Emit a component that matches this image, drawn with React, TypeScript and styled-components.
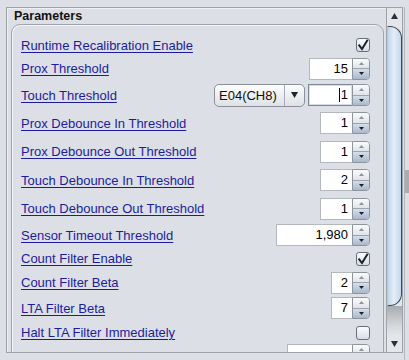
import React from "react";
import styled, { createGlobalStyle, css } from "styled-components";

const GlobalStyle = createGlobalStyle`
  html, body { margin: 0; padding: 0; }
  body {
    background: #dcdfe5;
    width: 409px;
    height: 360px;
    overflow: hidden;
    font-family: "Liberation Sans", Arial, sans-serif;
  }
`;

const Screen = styled.div`
  display: flex;
  width: 409px;
  height: 360px;
  padding-top: 7px;
  box-sizing: border-box;
`;

const Frame = styled.div`
  margin-left: 6px;
  width: 397px;
  height: 346px;
  box-sizing: border-box;
  border: 1px solid #9ea2a9;
  box-shadow: inset 1px 1px 0 #eef0f3;
  display: flex;
  overflow: hidden;
`;

const Viewport = styled.div`
  width: 379px;
  height: 100%;
  overflow: hidden;
  display: flex;
  flex-direction: column;
`;

const Title = styled.div`
  padding-left: 7px;
  height: 16px;
  line-height: 16px;
  font-size: 12.5px;
  font-weight: bold;
  color: #111;
  flex-shrink: 0;
`;

const Panel = styled.div`
  margin-left: 4px;
  width: 373px;
  box-sizing: border-box;
  border: 1px solid #a0a4ab;
  border-radius: 9px 9px 0 0;
  box-shadow: inset 1px 1px 0 #f3f4f6;
  padding: 9px 13px 0 9px;
  flex-shrink: 0;
  display: flex;
  flex-direction: column;
`;

const Row = styled.div<{ $h: number }>`
  height: ${(p) => p.$h}px;
  display: flex;
  align-items: center;
  justify-content: space-between;
  flex-shrink: 0;
`;

const Label = styled.span`
  font-size: 13px;
  color: #1d1d9c;
  text-decoration: underline;
  text-underline-offset: 2px;
  white-space: nowrap;
`;

const Controls = styled.div`
  display: flex;
  align-items: center;
  gap: 3px;
`;

const CheckBox = styled.div`
  width: 14px;
  height: 14px;
  box-sizing: border-box;
  border: 1px solid #686e77;
  border-radius: 3px;
  background: linear-gradient(#fbfbfc, #d9dde3);
  display: flex;
  align-items: center;
  justify-content: center;
`;

const SpinWrap = styled.div`
  display: flex;
  height: 22px;
`;

const Field = styled.div<{ $w: number; $focused?: boolean }>`
  width: ${(p) => p.$w}px;
  height: 22px;
  box-sizing: border-box;
  border: 1px solid #b3b8bf;
  border-right: none;
  background: #fff;
  font-size: 13px;
  line-height: 20px;
  color: #000;
  text-align: right;
  padding-right: 4px;
  display: flex;
  justify-content: flex-end;
  align-items: center;
  ${(p) =>
    p.$focused &&
    css`
      border: 1px solid #7c889b;
      border-right: none;
      box-shadow: inset 0 0 0 1px #d4dde9;
    `}
`;

const Caret = styled.span`
  display: inline-block;
  width: 1px;
  height: 14px;
  background: #000;
  margin-right: 1px;
`;

const SpinButtons = styled.div`
  width: 18px;
  height: 22px;
  box-sizing: border-box;
  border: 1px solid #8e949c;
  border-radius: 0 4px 4px 0;
  overflow: hidden;
  display: flex;
  flex-direction: column;
`;

const SpinHalf = styled.div<{ $down?: boolean }>`
  flex: 1;
  display: flex;
  align-items: center;
  justify-content: center;
  background: ${(p) =>
    p.$down
      ? "linear-gradient(#d5dfea, #a9b8ca)"
      : "linear-gradient(#fbfbfc, #e0e3e8)"};
  ${(p) => p.$down && "border-top: 1px solid #9ba4af;"}
`;

const Combo = styled.div`
  width: 91px;
  height: 23px;
  box-sizing: border-box;
  border: 1px solid #8c9199;
  border-radius: 5px;
  background: linear-gradient(#fdfdfd, #dde1e6);
  display: flex;
  align-items: stretch;
  font-size: 13px;
  color: #111;
`;

const ComboText = styled.div`
  flex: 1;
  padding-left: 4px;
  display: flex;
  align-items: center;
`;

const ComboArrow = styled.div`
  width: 19px;
  border-left: 1px solid #a7acb4;
  display: flex;
  align-items: center;
  justify-content: center;
`;

const ScrollBar = styled.div`
  width: 16px;
  height: 100%;
  box-sizing: border-box;
  border-left: 1px solid #9ea2a9;
  display: flex;
  flex-direction: column;
  background: #e4e6ea;
`;

const ArrowBtn = styled.div<{ $h: number }>`
  height: ${(p) => p.$h}px;
  flex-shrink: 0;
  display: flex;
  align-items: center;
  justify-content: center;
`;

const Thumb = styled.div`
  margin-top: 2px;
  height: 280px;
  flex-shrink: 0;
  box-sizing: border-box;
  border: 1px solid #3e4753;
  border-left: 1px solid #b9c9da;
  border-radius: 0 12px 12px 0;
  background: linear-gradient(to right, #c0d5ea, #e4eef8 45%, #c3d7eb);
`;

const TrackRest = styled.div`
  flex: 1;
  background: linear-gradient(#a8abb1, #d6d8dc 70%, #e2e4e7);
`;

const Edge = styled.div`
  flex: 1;
  margin-left: 1px;
  border-left: 1px solid #b4b7bd;
  display: flex;
  justify-content: flex-end;
`;

const EdgeThumb = styled.div`
  margin-top: 163px;
  width: 4px;
  height: 23px;
  background: #a9acb2;
`;

const Check = () => (
  <svg width="12" height="12" viewBox="0 0 12 12">
    <path d="M2.2 6.4 L5 10 L10.2 1.6" fill="none" stroke="#1b2230" strokeWidth="2" strokeLinecap="square" />
  </svg>
);

const Tri = ({ up, color, w = 5, h = 3 }: { up?: boolean; color: string; w?: number; h?: number }) => (
  <svg width={w} height={h} viewBox={`0 0 ${w} ${h}`}>
    <polygon points={up ? `0,${h} ${w},${h} ${w / 2},0` : `0,0 ${w},0 ${w / 2},${h}`} fill={color} />
  </svg>
);

const Spinner = ({ w, value, focused }: { w: number; value: string; focused?: boolean }) => (
  <SpinWrap>
    <Field $w={w} $focused={focused}>
      {focused && <Caret />}
      {value}
    </Field>
    <SpinButtons>
      <SpinHalf>
        <Tri up color="#8d939b" />
      </SpinHalf>
      <SpinHalf $down>
        <Tri color="#18202c" />
      </SpinHalf>
    </SpinButtons>
  </SpinWrap>
);

type RowDef = {
  label: string;
  h: number;
  kind: "check" | "spin" | "combo";
  checked?: boolean;
  w?: number;
  value?: string;
};

const rows: RowDef[] = [
  { label: "Runtime Recalibration Enable", h: 22, kind: "check", checked: true },
  { label: "Prox Threshold", h: 25, kind: "spin", w: 43, value: "15" },
  { label: "Touch Threshold", h: 28, kind: "combo", w: 44, value: "1" },
  { label: "Prox Debounce In Threshold", h: 28, kind: "spin", w: 32, value: "1" },
  { label: "Prox Debounce Out Threshold", h: 29, kind: "spin", w: 32, value: "1" },
  { label: "Touch Debounce In Threshold", h: 28, kind: "spin", w: 32, value: "2" },
  { label: "Touch Debounce Out Threshold", h: 29, kind: "spin", w: 32, value: "1" },
  { label: "Sensor Timeout Threshold", h: 24, kind: "spin", w: 76, value: "1,980" },
  { label: "Count Filter Enable", h: 23, kind: "check", checked: true },
  { label: "Count Filter Beta", h: 25, kind: "spin", w: 21, value: "2" },
  { label: "LTA Filter Beta", h: 26, kind: "spin", w: 21, value: "7" },
  { label: "Halt LTA Filter Immediately", h: 23, kind: "check", checked: false },
  { label: "", h: 22, kind: "spin", w: 65, value: "" },
];

export default function App() {
  return (
    <>
      <GlobalStyle />
      <Screen>
        <Frame>
          <Viewport>
            <Title>Parameters</Title>
            <Panel>
              {rows.map((r, i) => (
                <Row key={i} $h={r.h}>
                  <Label>{r.label}</Label>
                  <Controls>
                    {r.kind === "check" && <CheckBox>{r.checked && <Check />}</CheckBox>}
                    {r.kind === "spin" && <Spinner w={r.w!} value={r.value!} />}
                    {r.kind === "combo" && (
                      <>
                        <Combo>
                          <ComboText>E04(CH8)</ComboText>
                          <ComboArrow>
                            <Tri color="#1d2430" w={7} h={6} />
                          </ComboArrow>
                        </Combo>
                        <Spinner w={r.w!} value={r.value!} focused />
                      </>
                    )}
                  </Controls>
                </Row>
              ))}
            </Panel>
          </Viewport>
          <ScrollBar>
            <ArrowBtn $h={16}>
              <Tri up color="#2a303a" w={7} h={6} />
            </ArrowBtn>
            <Thumb />
            <TrackRest />
            <ArrowBtn $h={17}>
              <Tri color="#2a303a" w={7} h={6} />
            </ArrowBtn>
          </ScrollBar>
        </Frame>
        <Edge>
          <EdgeThumb />
        </Edge>
      </Screen>
    </>
  );
}
